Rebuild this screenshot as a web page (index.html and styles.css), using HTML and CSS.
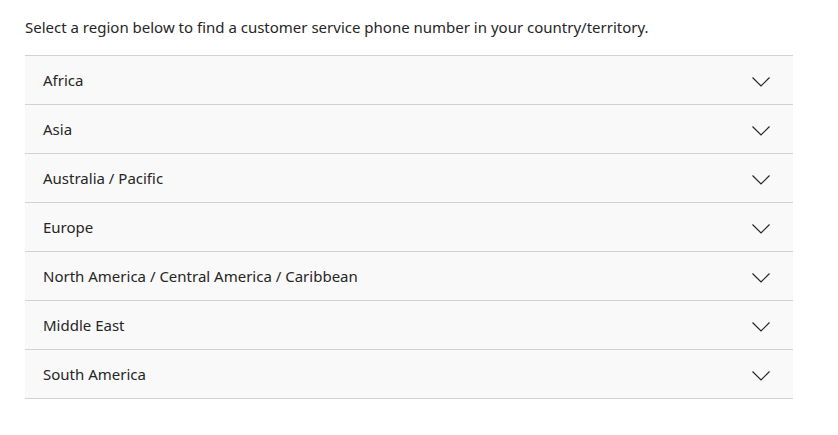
FILE: index.html
```html
<!DOCTYPE html>
<html>
<head>
  <meta charset="UTF-8">
  <title>Customer service phone numbers</title>
  <link rel="stylesheet" href="styles.css">
</head>
<body>
  <div class="container">
    <p class="intro">Select a region below to find a customer service phone number in your country/territory.</p>

    <div class="accordion">
      <button class="region">
        <span class="region-name">Africa</span>
        <svg class="chevron" width="18" height="10" viewBox="0 0 18 10"><path d="M0.5 0.5 L9 9 L17.5 0.5" /></svg>
      </button>
      <button class="region">
        <span class="region-name">Asia</span>
        <svg class="chevron" width="18" height="10" viewBox="0 0 18 10"><path d="M0.5 0.5 L9 9 L17.5 0.5" /></svg>
      </button>
      <button class="region">
        <span class="region-name">Australia / Pacific</span>
        <svg class="chevron" width="18" height="10" viewBox="0 0 18 10"><path d="M0.5 0.5 L9 9 L17.5 0.5" /></svg>
      </button>
      <button class="region">
        <span class="region-name">Europe</span>
        <svg class="chevron" width="18" height="10" viewBox="0 0 18 10"><path d="M0.5 0.5 L9 9 L17.5 0.5" /></svg>
      </button>
      <button class="region">
        <span class="region-name">North America / Central America / Caribbean</span>
        <svg class="chevron" width="18" height="10" viewBox="0 0 18 10"><path d="M0.5 0.5 L9 9 L17.5 0.5" /></svg>
      </button>
      <button class="region">
        <span class="region-name">Middle East</span>
        <svg class="chevron" width="18" height="10" viewBox="0 0 18 10"><path d="M0.5 0.5 L9 9 L17.5 0.5" /></svg>
      </button>
      <button class="region">
        <span class="region-name">South America</span>
        <svg class="chevron" width="18" height="10" viewBox="0 0 18 10"><path d="M0.5 0.5 L9 9 L17.5 0.5" /></svg>
      </button>
    </div>
  </div>
</body>
</html>
```

FILE: styles.css
```css
body {
  margin: 0;
  padding: 0;
  background: #ffffff;
  font-family: "Noto Sans", "Open Sans", Arial, sans-serif;
  color: #262626;
}

.container {
  width: 768px;
  padding: 17px 0 0 25px;
}

.intro {
  margin: 0 0 18px 0;
  font-size: 15px;
  line-height: 20px;
}

.accordion {
  border-top: 1px solid #d2d2d2;
}

.region {
  display: flex;
  align-items: center;
  justify-content: space-between;
  width: 100%;
  height: 49px;
  padding: 0 23px 0 18px;
  box-sizing: border-box;
  background: #f9f9f9;
  border: none;
  border-bottom: 1px solid #d2d2d2;
  font-family: inherit;
  font-size: 15px;
  color: #262626;
  text-align: left;
  cursor: pointer;
}

.chevron {
  display: block;
  margin-top: 3px;
}

.chevron path {
  fill: none;
  stroke: #262626;
  stroke-width: 1.2;
}
```
